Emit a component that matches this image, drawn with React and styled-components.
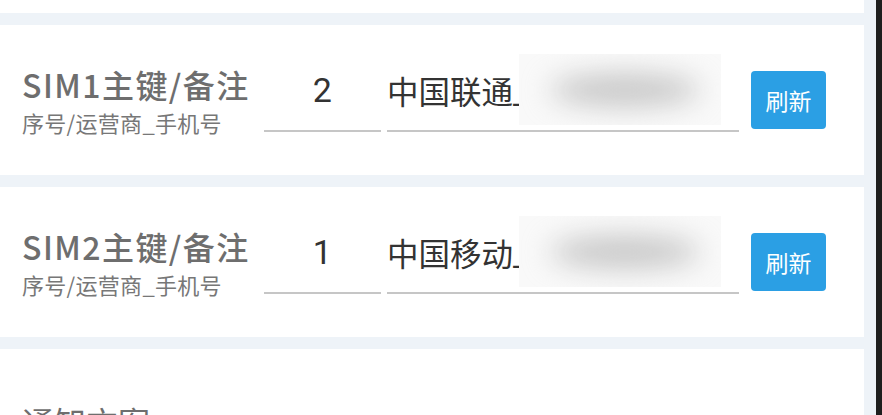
import React from "react";
import styled, { createGlobalStyle } from "styled-components";

const GlobalStyle = createGlobalStyle`
  html, body {
    margin: 0;
    padding: 0;
    background: #eef3f8;
  }
  body {
    font-family: "Noto Sans CJK SC", "Noto Sans", sans-serif;
    overflow: hidden;
  }
`;

const Screen = styled.div`
  display: flex;
  width: 882px;
  height: 415px;
  overflow: hidden;
  background: #eef3f8;
`;

const Column = styled.div`
  flex: 1;
  display: flex;
  flex-direction: column;
  gap: 12px;
  padding-right: 12px;
`;

const ScrollEdge = styled.div`
  width: 6px;
  background: #1e1e1e;
`;

const Card = styled.section`
  background: #ffffff;
  flex-shrink: 0;
  height: ${(p) => p.$height || "auto"};
`;

const SimRow = styled.div`
  height: 150px;
  display: flex;
  align-items: center;
  padding: 0 38px 0 22px;
`;

const LabelBlock = styled.div`
  display: flex;
  flex-direction: column;
  margin-right: 14px;
  margin-top: 1px;
`;

const Title = styled.div`
  font-size: 32px;
  font-weight: 500;
  line-height: 38px;
  margin-bottom: 5px;
  letter-spacing: 1.45px;
  color: #6e6e6e;
  white-space: nowrap;
`;

const Hint = styled.div`
  font-size: 22px;
  line-height: 28px;
  letter-spacing: 0.3px;
  color: #777777;
  white-space: nowrap;
`;

const Field = styled.div`
  flex: ${(p) => p.$grow} 1 0;
  min-width: 0;
  display: flex;
  align-items: center;
  justify-content: ${(p) => (p.$center ? "center" : "flex-start")};
  height: 71px;
  padding-bottom: 5px;
  border-bottom: 2px solid #c6c6c6;
  margin-bottom: 14px;
  margin-right: ${(p) => p.$space || 0}px;
  font-family: Roboto, "Noto Sans CJK SC", sans-serif;
  font-size: ${(p) => (p.$center ? "34px" : "31.5px")};
  font-weight: 400;
  color: #333333;
  white-space: nowrap;
  overflow: hidden;
`;

const Masked = styled.div`
  width: 202px;
  height: 71px;
  flex-shrink: 0;
  margin-left: -8px;
  background: #f9f9f9;
  display: flex;
  align-items: center;
  justify-content: center;
  overflow: hidden;
`;

const Smudge = styled.div`
  width: 150px;
  height: 32px;
  margin-left: 10px;
  border-radius: 50%;
  background: #c6c6c6;
  filter: blur(14px);
`;

const RefreshButton = styled.button`
  width: 75px;
  height: 58px;
  flex-shrink: 0;
  border: none;
  border-radius: 4px;
  background: #2b9fe4;
  color: #ffffff;
  font-family: "Noto Sans CJK SC", sans-serif;
  font-size: 23px;
  padding: 0;
  cursor: pointer;
`;

const SectionTitle = styled.div`
  padding: 52px 22px 0;
  font-size: 32px;
  line-height: 40px;
  color: #6e6e6e;
`;

const sims = [
  { name: "SIM1主键/备注", index: "2", carrier: "中国联通_" },
  { name: "SIM2主键/备注", index: "1", carrier: "中国移动_" },
];

export default function App() {
  return (
    <>
      <GlobalStyle />
      <Screen>
        <Column>
          <Card $height="13px" />
          {sims.map((sim) => (
            <Card key={sim.name}>
              <SimRow>
                <LabelBlock>
                  <Title>{sim.name}</Title>
                  <Hint>序号/运营商_手机号</Hint>
                </LabelBlock>
                <Field $grow={1} $center $space={6}>
                  {sim.index}
                </Field>
                <Field $grow={3} $space={12}>
                  <span>{sim.carrier}</span>
                  <Masked>
                    <Smudge />
                  </Masked>
                </Field>
                <RefreshButton>刷新</RefreshButton>
              </SimRow>
            </Card>
          ))}
          <Card $height="120px">
            <SectionTitle>通知方案</SectionTitle>
          </Card>
        </Column>
        <ScrollEdge />
      </Screen>
    </>
  );
}
